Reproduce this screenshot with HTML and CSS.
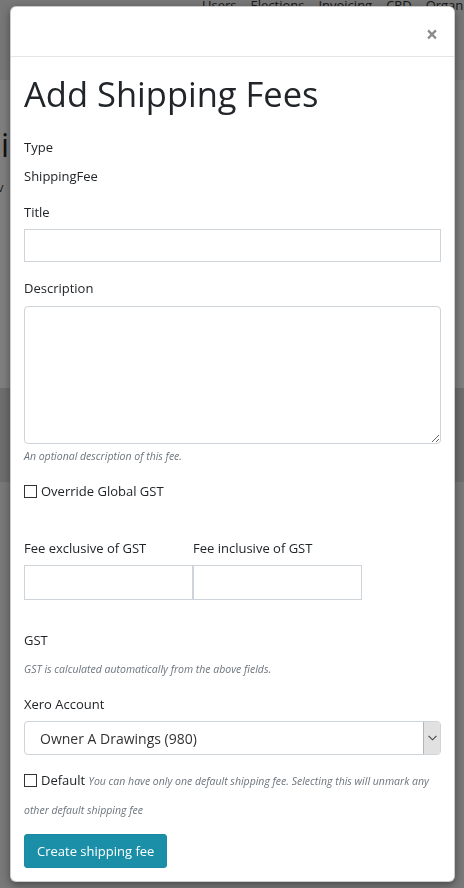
FILE: index.html
```html
<!DOCTYPE html>
<html lang="en">
<head>
<meta charset="utf-8">
<title>Add Shipping Fees</title>
<link rel="stylesheet" href="styles.css">
</head>
<body>
<div class="page">
  <nav class="bg-nav">
    <div class="nav-links">
      <span class="nav-link">Users</span>
      <span class="nav-link">Elections</span>
      <span class="nav-link">Invoicing</span>
      <span class="nav-link">CPD</span>
      <span class="nav-link">Organ</span>
    </div>
  </nav>
  <div class="bg-main">
    <h2 class="bg-title">i</h2>
    <span class="bg-link">v</span>
  </div>
  <div class="bg-band"></div>
  <div class="bg-rest"></div>
</div>
<div class="backdrop"></div>
<div class="modal">
  <div class="modal-header">
    <button class="close" type="button">×</button>
  </div>
  <div class="modal-body">
    <h1 class="modal-title">Add Shipping Fees</h1>
    <div class="label label-type">Type</div>
    <div class="value">ShippingFee</div>
    <label class="label label-title">Title</label>
    <input class="input input-title" type="text">
    <label class="label label-desc">Description</label>
    <textarea class="textarea"></textarea>
    <div class="help help-desc">An optional description of this fee.</div>
    <label class="check-row check-override"><input class="checkbox" type="checkbox"><span>Override Global GST</span></label>
    <div class="fee-grid">
      <label class="label">Fee exclusive of GST</label>
      <label class="label">Fee inclusive of GST</label>
      <input class="input input-fee" type="text">
      <input class="input input-fee" type="text">
    </div>
    <div class="label label-gst">GST</div>
    <div class="help help-gst">GST is calculated automatically from the above fields.</div>
    <label class="label label-xero">Xero Account</label>
    <div class="select">
      <span class="select-text">Owner A Drawings (980)</span>
      <span class="select-arrow"><svg width="9" height="6" viewBox="0 0 9 6"><path d="M0.5 0.8 L4.5 4.8 L8.5 0.8" fill="none" stroke="#444" stroke-width="1.1"/></svg></span>
    </div>
    <div class="default-row"><input class="checkbox checkbox-inline" type="checkbox"><span class="default-text">Default</span> <em class="default-help">You can have only one default shipping fee. Selecting this will unmark any other default shipping fee</em></div>
    <button class="btn" type="button">Create shipping fee</button>
  </div>
</div>
</body>
</html>
```
FILE: styles.css
```css
html, body {
  margin: 0;
  padding: 0;
}
body {
  width: 464px;
  height: 888px;
  overflow: hidden;
  font-family: "Open Sans", "Noto Sans", sans-serif;
  color: #212529;
}
.page {
  display: flex;
  flex-direction: column;
  height: 888px;
}
.bg-nav {
  height: 80px;
  background: #eeeeee;
  flex: none;
}
.nav-links {
  display: flex;
  gap: 14px;
  padding-left: 202px;
  margin-top: -1px;
  white-space: nowrap;
}
.nav-link {
  font-size: 13px;
  line-height: 13px;
  color: #333;
}
.bg-main {
  height: 308px;
  background: #ffffff;
  flex: none;
}
.bg-title {
  margin: 45px 0 0 1px;
  font-size: 32px;
  line-height: 40px;
  font-weight: 400;
  color: #222;
}
.bg-link {
  display: block;
  margin: 12px 0 0 -3px;
  font-size: 13px;
  line-height: 20px;
  color: #444;
}
.bg-band {
  height: 94px;
  background: #dcdcdc;
  flex: none;
}
.bg-rest {
  flex: 1;
  background: #f2f2f2;
}
.backdrop {
  position: fixed;
  inset: 0;
  background: rgba(0, 0, 0, 0.5);
}
.modal {
  position: absolute;
  top: 6px;
  left: 10px;
  width: 445px;
  box-sizing: border-box;
  background: #fff;
  border: 1px solid rgba(0, 0, 0, 0.2);
  border-radius: 6px;
  box-shadow: 0 3px 9px rgba(0, 0, 0, 0.4);
}
.modal-header {
  height: 49px;
  border-bottom: 1px solid #e5e5e5;
  display: flex;
  justify-content: flex-end;
  align-items: center;
  padding: 0 16px;
}
.close {
  border: 0;
  background: none;
  padding: 0;
  margin-top: 5px;
  font-family: "Open Sans", sans-serif;
  font-size: 21px;
  line-height: 20px;
  font-weight: 700;
  color: #8a8a8a;
}
.modal-body {
  padding: 15px 13px 13px 13px;
  display: flex;
  flex-direction: column;
  align-items: flex-start;
}
.modal-title {
  margin: 0;
  font-size: 34.5px;
  line-height: 44px;
  font-weight: 400;
  color: #212529;
}
.label, .value {
  display: block;
  font-size: 13px;
  line-height: 20px;
  font-weight: 400;
  color: #212529;
}
.label-type { margin-top: 21px; }
.value { margin-top: 9px; }
.label-title { margin-top: 16px; }
.input {
  box-sizing: border-box;
  height: 33px;
  border: 1px solid #ced4da;
  border-radius: 0;
  background: #fff;
  margin: 0;
  padding: 0 10px;
  font-family: inherit;
}
.input-title {
  width: 100%;
  margin-top: 7px;
}
.label-desc { margin-top: 16px; }
.textarea {
  box-sizing: border-box;
  width: 100%;
  height: 138px;
  margin: 8px 0 0;
  border: 1px solid #ced4da;
  border-radius: 4px;
  font-family: inherit;
  display: block;
}
.help {
  font-size: 10.5px;
  line-height: 16px;
  font-style: italic;
  color: #6c757d;
}
.help-desc { margin-top: 4px; }
.check-row {
  display: flex;
  align-items: center;
  font-size: 13px;
  line-height: 20px;
  color: #212529;
}
.check-override { margin-top: 17px; }
.checkbox {
  appearance: none;
  -webkit-appearance: none;
  width: 13px;
  height: 13px;
  box-sizing: border-box;
  border: 1px solid #333;
  background: #fff;
  margin: 0 4px 0 0;
  flex: none;
}
.fee-grid {
  display: grid;
  grid-template-columns: 169px 169px;
  column-gap: 0;
  row-gap: 7px;
  margin-top: 37px;
}
.input-fee {
  width: 100%;
  height: 35px;
}
.label-gst { margin-top: 30px; }
.help-gst { margin-top: 11px; }
.label-xero { margin-top: 17px; }
.select {
  box-sizing: border-box;
  width: 100%;
  height: 34px;
  margin-top: 7px;
  border: 1px solid #ced4da;
  border-radius: 4px;
  display: flex;
  align-items: stretch;
  background: #fff;
}
.select-text {
  flex: 1;
  display: flex;
  align-items: center;
  padding-left: 15px;
  font-size: 14px;
  color: #333;
}
.select-arrow {
  width: 16px;
  background: #e1e1e1;
  border-left: 1px solid #b5b5b5;
  border-radius: 0 3px 3px 0;
  display: flex;
  align-items: center;
  justify-content: center;
}
.default-row {
  margin-top: 11px;
  font-size: 13px;
  line-height: 28px;
  color: #212529;
}
.checkbox-inline {
  display: inline-block;
  vertical-align: -2px;
}
.default-help {
  font-size: 10.5px;
  color: #6c757d;
}
.btn {
  margin-top: 10px;
  height: 34px;
  box-sizing: border-box;
  padding: 0 12px;
  border: 1px solid #1a8aa2;
  border-radius: 3px;
  background: #1b8fa7;
  color: #fff;
  font-family: inherit;
  font-size: 13px;
  line-height: 20px;
}
```
